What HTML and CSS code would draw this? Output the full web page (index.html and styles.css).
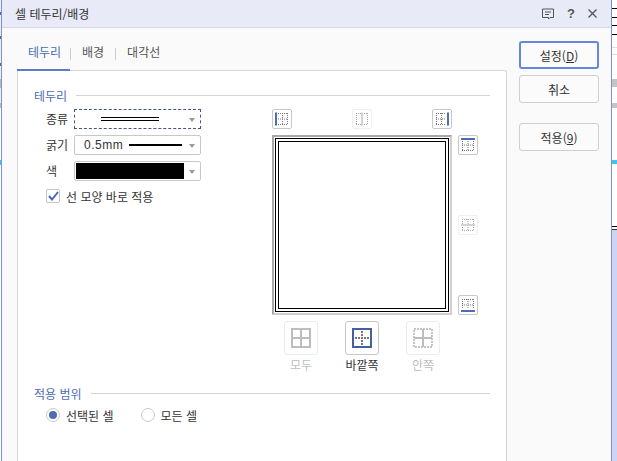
FILE: index.html
```html
<!DOCTYPE html>
<html lang="ko">
<head>
<meta charset="utf-8">
<title>셀 테두리/배경</title>
<link rel="stylesheet" href="styles.css">
</head>
<body>
<div class="backdrop">
  <div class="strip-left"></div>
  <div class="dialog">
    <header class="titlebar">
      <span class="title">셀 테두리/배경</span>
      <div class="win-icons">
        <svg width="14" height="14" viewBox="0 0 14 14"><path d="M1.500 2h11v8.500h-3.500l-1.500 1.500v-1.500h-6z" fill="none" stroke="#555"/><path d="M4 5h6M4 7.500h4" stroke="#555"/></svg>
        <span class="help">?</span>
        <svg width="11" height="11" viewBox="0 0 11 11"><path d="M1.500 1.500l8 8M9.500 1.500l-8 8" stroke="#555" stroke-width="1.300"/></svg>
      </div>
    </header>
    <div class="body">
      <div class="main">
        <nav class="tabs">
          <span class="tab active">테두리</span><i class="tabsep"></i>
          <span class="tab">배경</span><i class="tabsep"></i>
          <span class="tab">대각선</span>
        </nav>
        <section class="panel">
          <div class="legend"><span>테두리</span><i></i></div>
          <div class="border-area">
            <div class="fields">
              <div class="field"><label>종류</label>
                <div class="select focus"><span class="dbl-line"></span><span class="arrow"></span></div></div>
              <div class="field"><label>굵기</label>
                <div class="select"><span class="mm">0.5mm</span><span class="thick-line"></span><span class="arrow"></span></div></div>
              <div class="field"><label>색</label>
                <div class="select color"><span class="swatch"></span><span class="arrow"></span></div></div>
              <div class="check-row"><span class="checkbox"><svg width="11" height="10" viewBox="0 0 11 10"><path d="M1 5l3 3.500 6-7.500" fill="none" stroke="#4a69ad" stroke-width="2"/></svg></span>선 모양 바로 적용</div>
            </div>
            <div class="preview-wrap">
              <div class="preview-grid">
                <div class="top-btns">
                  <span class="ico"><svg width="14" height="14" viewBox="0 0 14 14"><path class="dots" d="M3 1.500h10M3 7h10M3 12.500h10M7.500 1v12M12.500 1v12"/><path d="M1 0.500v13" stroke="#4d6cb4" stroke-width="2"/></svg></span>
                  <span class="ico off"><svg width="14" height="14" viewBox="0 0 14 14"><path class="dots" d="M1 1.500h12M1 12.500h12M1.500 1v12M12.500 1v12"/><path d="M7 0.500v13" stroke="#bbb" stroke-width="2"/></svg></span>
                  <span class="ico"><svg width="14" height="14" viewBox="0 0 14 14"><path class="dots" d="M1 1.500h10M1 7h10M1 12.500h10M1.500 1v12M6.500 1v12"/><path d="M13 0.500v13" stroke="#4d6cb4" stroke-width="2"/></svg></span>
                </div>
                <div class="preview"><div class="pv-outer"><div class="pv-inner"></div></div></div>
                <div class="side-btns">
                  <span class="ico"><svg width="14" height="14" viewBox="0 0 14 14"><path class="dots" d="M1 7h12M1 12.500h12M1.500 3v10M7 3v10M12.500 3v10"/><path d="M0 1h14" stroke="#4d6cb4" stroke-width="2"/></svg></span>
                  <span class="ico off"><svg width="14" height="14" viewBox="0 0 14 14"><path class="dots" d="M1 1.500h12M1 12.500h12M1.500 1v12M7 1v12M12.500 1v12"/><path d="M0 7h14" stroke="#bbb" stroke-width="2"/></svg></span>
                  <span class="ico"><svg width="14" height="14" viewBox="0 0 14 14"><path class="dots" d="M1 1.500h12M1 7h12M1.500 1v10M7 1v10M12.500 1v10"/><path d="M0 13h14" stroke="#4d6cb4" stroke-width="2"/></svg></span>
                </div>
              </div>
              <div class="presets">
                <div class="preset off"><span class="pbtn"><svg width="20" height="20" viewBox="0 0 20 20"><path d="M1 1h18v18h-18zM10 1v18M1 10h18" fill="none" stroke="#bdbdbd" stroke-width="2"/></svg></span><span>모두</span></div>
                <div class="preset"><span class="pbtn on"><svg width="20" height="20" viewBox="0 0 20 20"><path d="M1 1h18v18h-18z" fill="none" stroke="#44609f" stroke-width="2"/><path d="M10 3v14M3 10h14" stroke="#777" stroke-width="2" stroke-dasharray="2 1"/></svg></span><span>바깥쪽</span></div>
                <div class="preset off"><span class="pbtn"><svg width="20" height="20" viewBox="0 0 20 20"><path d="M1 1h18v18h-18z" fill="none" stroke="#c4c4c4" stroke-width="2" stroke-dasharray="2 1"/><path d="M10 1v18M1 10h18" stroke="#bdbdbd" stroke-width="2"/></svg></span><span>안쪽</span></div>
              </div>
            </div>
          </div>
          <div class="legend"><span>적용 범위</span><i></i></div>
          <div class="radios">
            <span class="radio-item"><span class="radio on"></span>선택된 셀</span>
            <span class="radio-item"><span class="radio"></span>모든 셀</span>
          </div>
        </section>
      </div>
      <aside class="actions">
        <button class="btn primary">설정(<u>D</u>)</button>
        <button class="btn">취소</button>
        <button class="btn apply">적용(<u>9</u>)</button>
      </aside>
    </div>
  </div>
  <div class="strip-right"></div>
</div>
</body>
</html>
```
FILE: styles.css
```css
* { box-sizing: border-box; }
html, body { margin: 0; height: 100%; }
body { font-family: "Noto Sans CJK KR", "Noto Sans", sans-serif; font-size: 12px; color: #333; overflow: hidden; background: #fff; }
.backdrop { width: 617px; height: 461px; display: flex; overflow: hidden; background: #fff; }
.strip-left { width: 1px; flex: none; background: linear-gradient(to bottom, #eee 0 12px, #4d6cb4 12px 15px, #eee 15px 36px, #4d6cb4 36px 39px, #eee 39px 63px, #666 63px 66px, #eee 66px 79px, #bbb 79px 88px, #eee 88px 103px, #bbb 103px 108px, #fff 108px 160px, #45c3ee 160px 165px, #fff 165px); }
.strip-right { flex: 1; background: linear-gradient(to bottom, #fff 0 8px, #000 8px 9px, #fff 9px 17px, #000 17px 18px, #fff 18px 25px, #000 25px 26px, #fff 26px 34px, #000 34px 35px, #fff 35px 47px, #ddd 47px 48px, #fff 48px 54px, #ddd 54px 55px, #fff 55px 79px, #c4c4c4 79px 87px, #fff 87px 103px, #c4c4c4 103px 108px, #fff 108px 160px, #45c3ee 160px 164px, #fff 164px 226px, #000 226px 227px, #fff 227px 229px, #333 229px 230px, #ccd5f1 230px); }
.dialog { width: 611px; height: 461px; flex: none; display: flex; flex-direction: column; background: #fafafa; border-left: 1px solid #7d92d6; border-right: 1px solid #7d92d6; }
.titlebar { height: 28px; flex: none; display: flex; align-items: center; justify-content: space-between; padding: 0 13px; background: #e8ebf7; border-bottom: 1px solid #d5d9ec; }
.title { font-size: 12px; color: #333; }
.win-icons { display: flex; align-items: center; gap: 11px; color: #555; }
.help { font-family: "Liberation Sans", sans-serif; font-weight: 700; font-size: 13px; line-height: 14px; width: 10px; text-align: center; }
.body { flex: 1; display: flex; min-height: 0; }
.main { width: 505px; padding-left: 15px; display: flex; flex-direction: column; flex: none; }
.tabs { height: 43px; flex: none; display: flex; margin-bottom: -1px; position: relative; z-index: 1; }
.tab { display: flex; align-items: center; padding: 6px 11px 0; color: #555; font-size: 12px; border-bottom: 2px solid transparent; }
.tab.active { color: #4d6cb4; border-bottom-color: #5d7cc8; width: 53px; padding: 6px 0 0 11px; }
.tabsep { width: 1px; height: 12px; background: #ccc; flex: none; align-self: center; margin-top: 9px; }
.panel { flex: 1; background: #fff; border: 1px solid #d6d6d6; border-bottom: 0; border-radius: 0 3px 0 0; padding: 15px 16px 0; }
.legend { display: flex; align-items: center; gap: 9px; height: 18px; color: #4d6cb4; }
.legend i { flex: 1; height: 1px; background: #d4d4d4; }
.border-area { display: flex; height: 280px; }
.fields { width: 184px; flex: none; padding: 5px 0 0 12px; display: flex; flex-direction: column; gap: 6px; }
.field { display: flex; align-items: center; height: 20px; }
.field label { width: 28px; flex: none; color: #333; line-height: 20px; }
.select { width: 127px; height: 20px; display: flex; align-items: center; position: relative; background: #fff; border: 1px solid #c8c8c8; border-radius: 2px; padding: 0 9px; }
.select.focus { border: 1px dashed #44557f; border-radius: 0; justify-content: center; padding: 0 16px 0 0; }
.dbl-line { width: 58px; height: 4px; border-top: 1px solid #000; border-bottom: 1px solid #000; }
.mm { font-family: "Liberation Sans", sans-serif; font-size: 12px; letter-spacing: 0.5px; color: #333; }
.thick-line { width: 53px; height: 2px; background: #000; margin-left: 6px; }
.select.color { padding: 0 0 0 1px; }
.swatch { width: 108px; height: 16px; background: #000; }
.arrow { position: absolute; right: 5px; top: 8px; border-left: 3px solid transparent; border-right: 3px solid transparent; border-top: 4px solid #999; }
.check-row { display: flex; align-items: center; gap: 6px; height: 16px; margin-top: 1px; color: #333; }
.checkbox { width: 14px; height: 14px; border: 1px solid #c4c4c4; border-radius: 2px; display: flex; align-items: center; justify-content: center; }
.preview-wrap { margin-left: 54px; width: 206px; padding-top: 5px; }
.preview-grid { display: grid; grid-template-columns: 180px 20px; grid-template-rows: 20px 180px; column-gap: 6px; row-gap: 6px; }
.top-btns { grid-column: 1 / 3; width: 180px; display: flex; justify-content: space-between; }
.ico { width: 20px; height: 20px; display: flex; align-items: center; justify-content: center; background: #fff; border: 1px solid #c8c8c8; border-radius: 2px; }
.ico.off { border-color: #e8e8e8; opacity: .65; }
.dots { stroke: #777; fill: none; stroke-dasharray: 1 1; }
.preview { width: 180px; height: 180px; border: 2px solid; border-color: #a8a8a8 #cfcfcf #cfcfcf #a8a8a8; padding: 1px; background: #fff; }
.pv-outer { width: 100%; height: 100%; border: 1px solid #000; padding: 2px; }
.pv-inner { width: 100%; height: 100%; border: 1px solid #000; }
.side-btns { display: flex; flex-direction: column; justify-content: space-between; }
.presets { display: flex; margin-top: 6px; padding-left: 12px; gap: 27px; }
.preset { width: 34px; display: flex; flex-direction: column; align-items: center; gap: 2px; color: #333; white-space: nowrap; line-height: 16px; }
.preset.off { color: #bdbdbd; }
.pbtn { width: 34px; height: 34px; display: flex; align-items: center; justify-content: center; border: 1px solid #c8c8c8; border-radius: 3px; background: #fff; flex: none; }
.preset.off .pbtn { border-color: #ececec; }
.radios { display: flex; gap: 27px; padding-left: 12px; margin-top: 4px; height: 18px; }
.radio-item { display: flex; align-items: center; gap: 6px; color: #333; }
.radio { width: 14px; height: 14px; border-radius: 50%; border: 1px solid #c8c8c8; background: #fff; position: relative; }
.radio.on::after { content: ""; position: absolute; left: 2px; top: 2px; width: 8px; height: 8px; border-radius: 50%; background: #4d6cb4; }
.actions { flex: 1; padding: 13px 0 0 12px; display: flex; flex-direction: column; }
.btn { width: 80px; height: 28px; font: inherit; font-size: 12px; color: #333; background: #fbfbfb; border: 1px solid #cfcfcf; border-radius: 3px; padding: 0; margin-bottom: 6px; }
.btn.primary { border: 2px solid #6588dc; }
.btn.apply { margin-top: 14px; }
```
